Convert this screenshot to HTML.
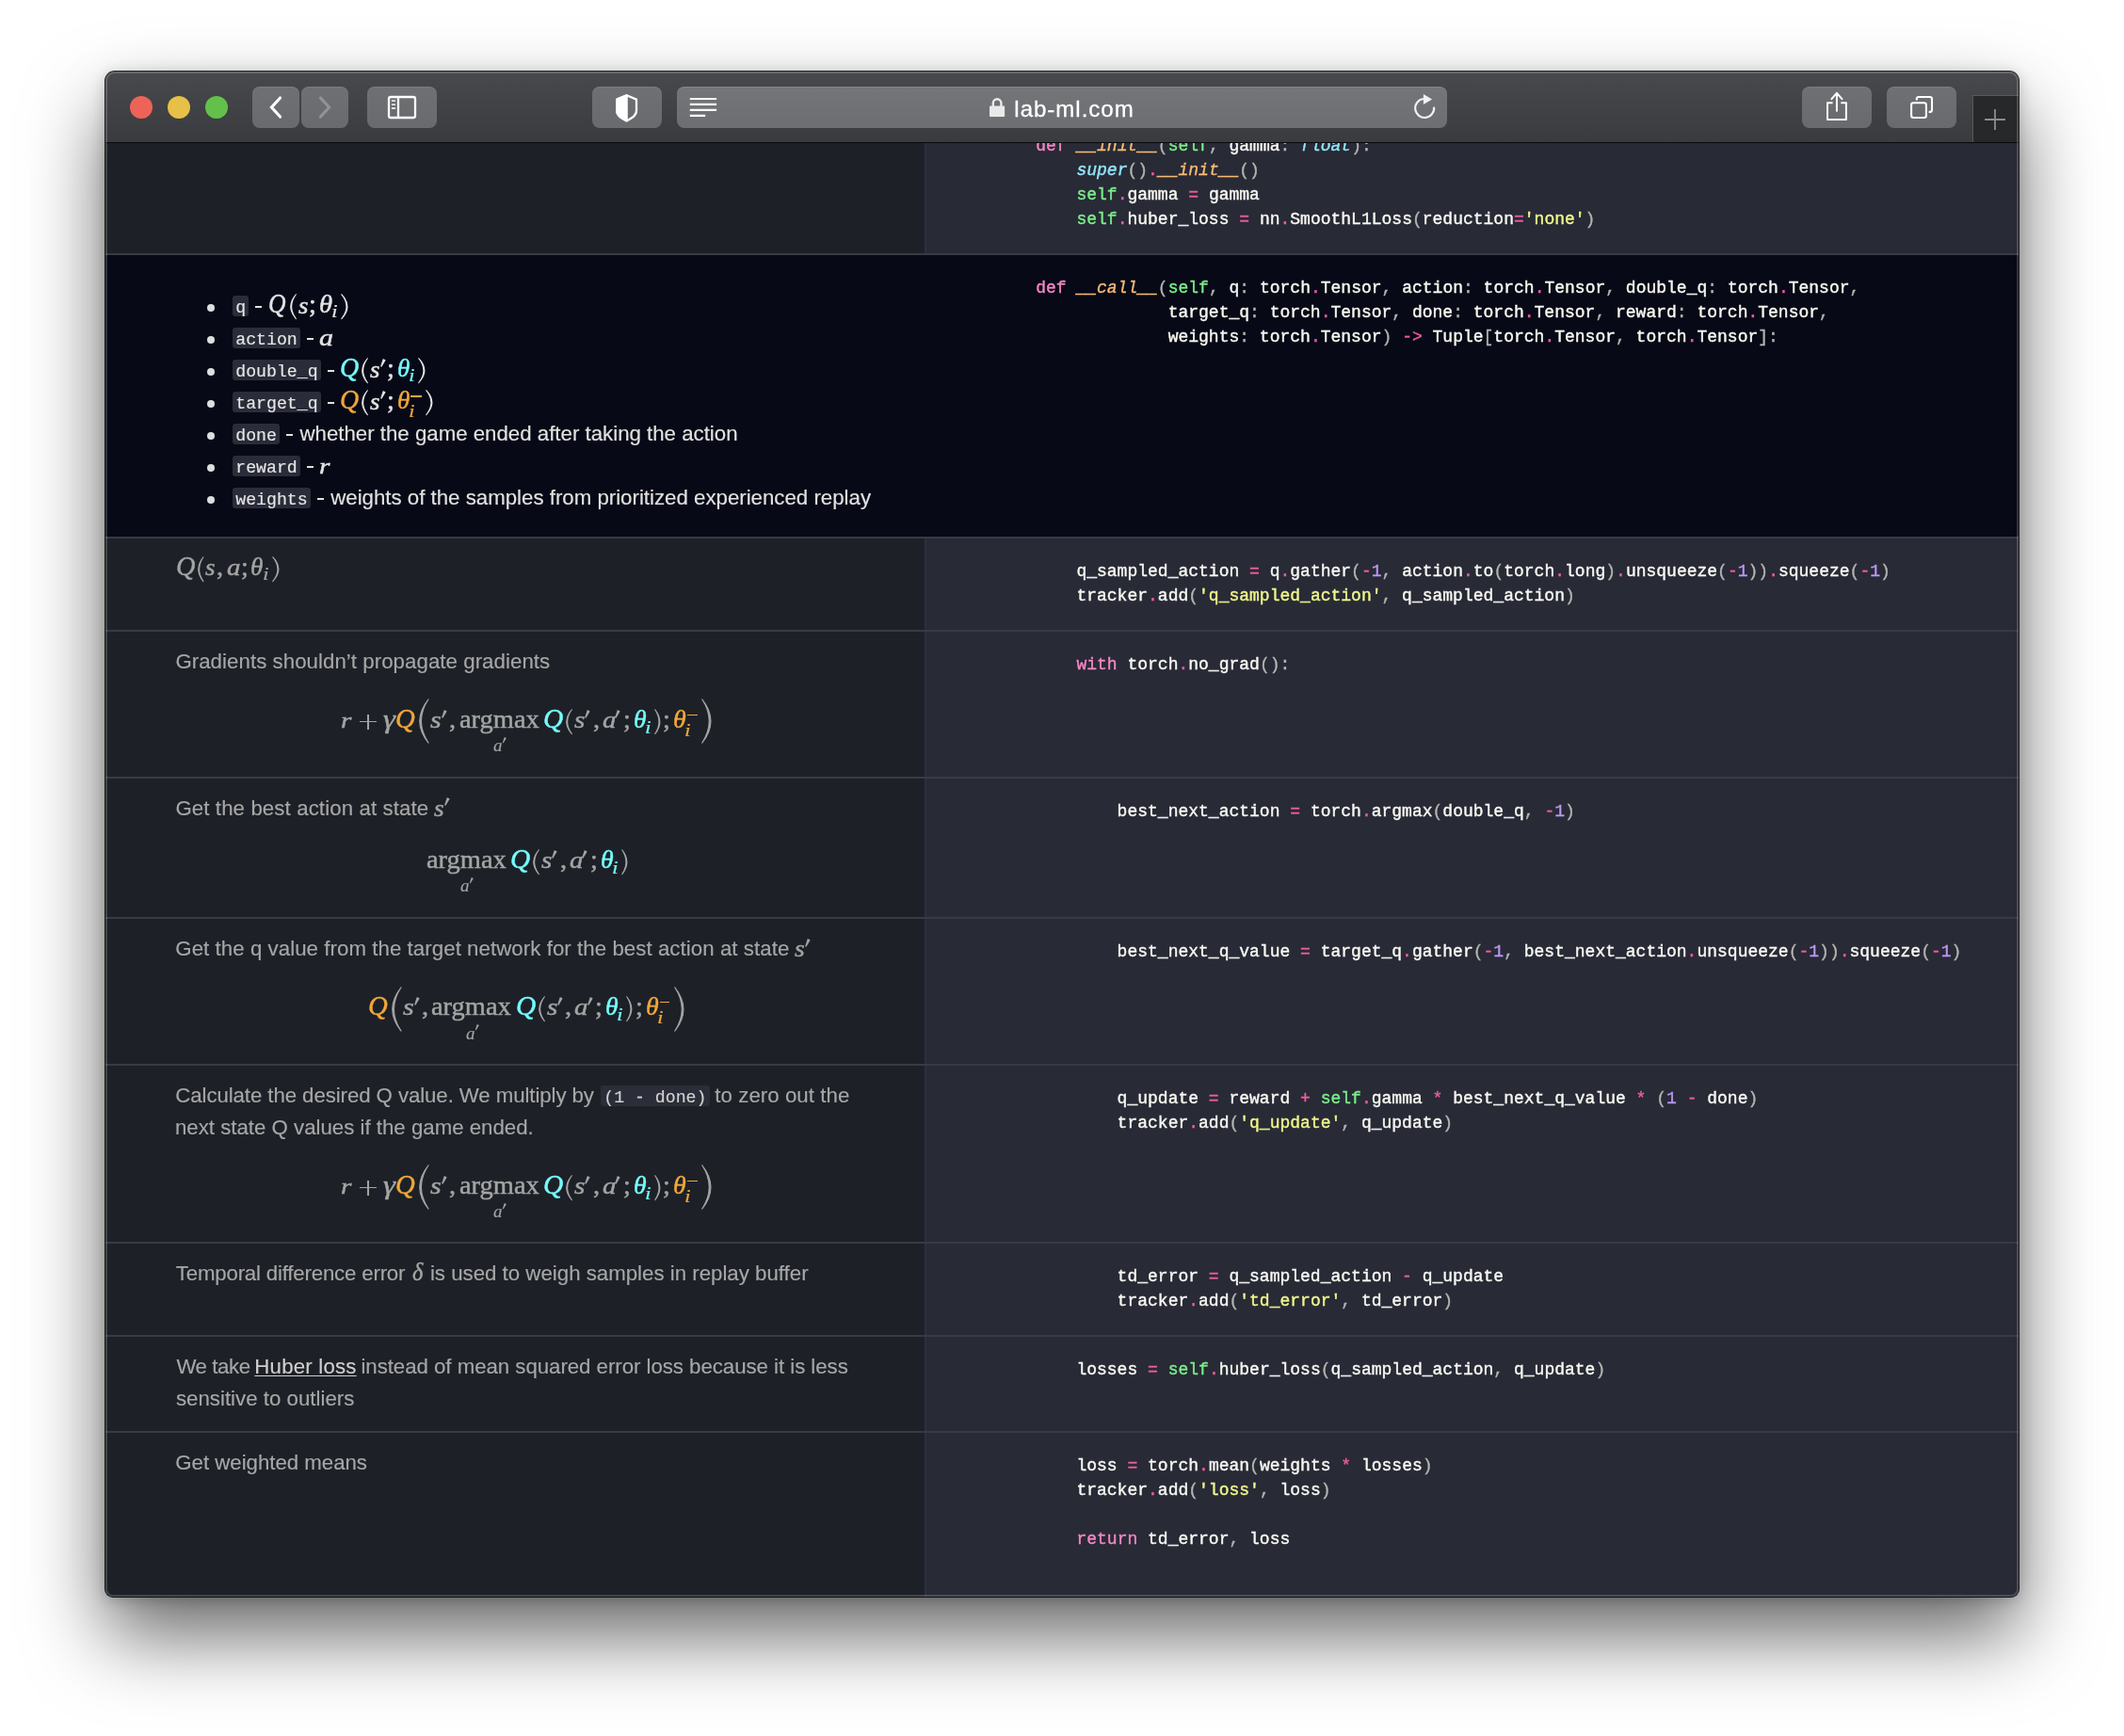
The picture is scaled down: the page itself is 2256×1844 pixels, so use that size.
<!DOCTYPE html>
<html>
<head>
<meta charset="utf-8">
<title>lab-ml.com</title>
<style>
*{box-sizing:border-box;margin:0;padding:0}
html,body{width:2256px;height:1844px;background:#fff;overflow:hidden}
body{position:relative;font-family:"Liberation Sans",sans-serif}
#win{position:absolute;left:112px;top:76px;width:2032px;height:1620px;border-radius:10px 10px 8px 8px;overflow:hidden;background:#1d2127;z-index:2;will-change:transform}
#shadow{position:absolute;left:112px;top:76px;width:2032px;height:1620px;border-radius:10px 10px 8px 8px;z-index:1;
 box-shadow:0 0 0 1px rgba(0,0,0,.85),0 41px 84px 0 rgba(0,0,0,.6),0 3px 16px 0 rgba(0,0,0,.22)}
#rim{position:absolute;left:0;top:0;width:2032px;height:1620px;border-radius:10px 10px 8px 8px;box-shadow:inset 0 0 0 2px rgba(255,255,255,.17);z-index:9;pointer-events:none}
/* ---------- toolbar ---------- */
#tb{position:absolute;left:0;top:0;width:2032px;height:76px;background:linear-gradient(#48494c,#3a3b3e);border-bottom:1.5px solid #08080a}
.tl{position:absolute;top:26px;width:24px;height:24px;border-radius:50%}
.btn{position:absolute;top:16px;height:44px;border-radius:8px;background:linear-gradient(#6f7073,#696a6d);box-shadow:inset 0 1px 0 rgba(255,255,255,.09)}
.btn svg{position:absolute;left:0;top:0}
#url{position:absolute;left:607px;top:16px;width:818px;height:44px;border-radius:8px;background:linear-gradient(#747578,#6d6e71);box-shadow:inset 0 1px 0 rgba(255,255,255,.13)}
#urltxt{position:absolute;left:965.3px;top:24.5px;font-size:24px;letter-spacing:1px;line-height:30px;-webkit-text-stroke:.3px #fff;color:#fff;white-space:pre}
#newtab{position:absolute;left:1983px;top:25px;width:50px;height:50px;background:#27282a;border-left:1px solid #58595b;border-top:1px solid #58595b}
/* ---------- content ---------- */
#content{position:absolute;left:0;top:76px;width:2032px;height:1544px;background:#1d2127;overflow:hidden}
#right{position:absolute;left:872px;top:0;width:1160px;height:1544px;background:#282a36}
#vdiv{position:absolute;left:870px;top:0;width:2px;height:1544px;background:#2b3140}
.hl{position:absolute;left:0;width:2032px;background:#070916}
.hr{position:absolute;left:0;width:2032px;height:2px;background:#383a47}
.doc{position:absolute;left:75px;-webkit-text-stroke:.15px;font-size:22.25px;line-height:34px;color:#a7a7a7;white-space:nowrap}
.lk{color:#cfcfcf;text-decoration:underline;text-decoration-thickness:1.2px;text-underline-offset:2.2px}
pre{position:absolute;left:945px;font-family:"Liberation Mono",monospace;font-size:18px;line-height:26px;color:#f8f8f2;white-space:pre;-webkit-text-stroke:.38px}
.k{color:#f587c6}.o{color:#ee5c9f}.p{color:#b4b4b0}.s{color:#f0f68b}.m{color:#bc98f5}.bp{color:#7bee8a}.fm{color:#f5bb75;font-style:italic}.nb{color:#93e6f8;font-style:italic}
code{font-family:"Liberation Mono",monospace;font-size:18.2px;line-height:1;padding:0 3.25px;color:#e6e6e6;position:relative;z-index:0}
code::before{content:"";position:absolute;z-index:-1;left:0;right:0;top:-2.85px;height:21.9px;border-radius:3px;background:#2a2c39}
.c2{color:#d2d2d2}.c2::before{background:#2b2d38}
.hy{display:inline-block;width:7.1px;height:2.1px;margin:0 7.5px 0 6.7px;vertical-align:5px;background:currentColor}

.hi{color:#e2e2e2}
.bul{position:absolute;left:107.7px;width:8.4px;height:8.4px;border-radius:50%;background:#dedede}
.mth{position:absolute;left:0;top:0;color:#a4a4a4}
.mth.hi{color:#e4e4e4}
.mth span{position:absolute;white-space:pre;line-height:1;transform-origin:0 50%;-webkit-text-stroke:.45px currentColor}
.mi{font-family:"Liberation Serif",serif;font-style:italic}
.mr{font-family:"Liberation Serif",serif}
.mb{font-family:"Liberation Serif",serif;font-style:italic;font-weight:bold}
.pa{position:absolute;overflow:visible}
.ln{position:absolute;display:block}
</style>
</head>
<body>
<div id="shadow"></div>
<div id="win">
<div id="content">
<div id="right"></div><div id="vdiv"></div>
<div class="hl" style="top:119px;height:299px"></div>
<div class="hr" style="top:117px"></div>
<div class="hr" style="top:418px"></div>
<div class="hr" style="top:517px"></div>
<div class="hr" style="top:673px"></div>
<div class="hr" style="top:822px"></div>
<div class="hr" style="top:978px"></div>
<div class="hr" style="top:1167px"></div>
<div class="hr" style="top:1266px"></div>
<div class="hr" style="top:1368px"></div>
<pre style="top:-9.8px">    <span class="k">def</span> <span class="fm">__init__</span><span class="p">(</span><span class="bp">self</span><span class="p">,</span> gamma<span class="p">:</span> <span class="nb">float</span><span class="p">)</span><span class="p">:</span>
        <span class="nb">super</span><span class="p">(</span><span class="p">)</span><span class="o">.</span><span class="fm">__init__</span><span class="p">(</span><span class="p">)</span>
        <span class="bp">self</span><span class="o">.</span>gamma <span class="o">=</span> gamma
        <span class="bp">self</span><span class="o">.</span>huber_loss <span class="o">=</span> nn<span class="o">.</span>SmoothL1Loss<span class="p">(</span>reduction<span class="o">=</span><span class="s">&#x27;none&#x27;</span><span class="p">)</span></pre>
<pre style="top:140.9px">    <span class="k">def</span> <span class="fm">__call__</span><span class="p">(</span><span class="bp">self</span><span class="p">,</span> q<span class="p">:</span> torch<span class="o">.</span>Tensor<span class="p">,</span> action<span class="p">:</span> torch<span class="o">.</span>Tensor<span class="p">,</span> double_q<span class="p">:</span> torch<span class="o">.</span>Tensor<span class="p">,</span>
                 target_q<span class="p">:</span> torch<span class="o">.</span>Tensor<span class="p">,</span> done<span class="p">:</span> torch<span class="o">.</span>Tensor<span class="p">,</span> reward<span class="p">:</span> torch<span class="o">.</span>Tensor<span class="p">,</span>
                 weights<span class="p">:</span> torch<span class="o">.</span>Tensor<span class="p">)</span> <span class="o">-&gt;</span> Tuple<span class="p">[</span>torch<span class="o">.</span>Tensor<span class="p">,</span> torch<span class="o">.</span>Tensor<span class="p">]</span><span class="p">:</span></pre>
<pre style="top:441.9px">        q_sampled_action <span class="o">=</span> q<span class="o">.</span>gather<span class="p">(</span><span class="o">-</span><span class="m">1</span><span class="p">,</span> action<span class="o">.</span>to<span class="p">(</span>torch<span class="o">.</span>long<span class="p">)</span><span class="o">.</span>unsqueeze<span class="p">(</span><span class="o">-</span><span class="m">1</span><span class="p">)</span><span class="p">)</span><span class="o">.</span>squeeze<span class="p">(</span><span class="o">-</span><span class="m">1</span><span class="p">)</span>
        tracker<span class="o">.</span>add<span class="p">(</span><span class="s">&#x27;q_sampled_action&#x27;</span><span class="p">,</span> q_sampled_action<span class="p">)</span></pre>
<pre style="top:540.9px">        <span class="k">with</span> torch<span class="o">.</span>no_grad<span class="p">(</span><span class="p">)</span><span class="p">:</span></pre>
<pre style="top:696.9px">            best_next_action <span class="o">=</span> torch<span class="o">.</span>argmax<span class="p">(</span>double_q<span class="p">,</span> <span class="o">-</span><span class="m">1</span><span class="p">)</span></pre>
<pre style="top:845.9px">            best_next_q_value <span class="o">=</span> target_q<span class="o">.</span>gather<span class="p">(</span><span class="o">-</span><span class="m">1</span><span class="p">,</span> best_next_action<span class="o">.</span>unsqueeze<span class="p">(</span><span class="o">-</span><span class="m">1</span><span class="p">)</span><span class="p">)</span><span class="o">.</span>squeeze<span class="p">(</span><span class="o">-</span><span class="m">1</span><span class="p">)</span></pre>
<pre style="top:1001.9px">            q_update <span class="o">=</span> reward <span class="o">+</span> <span class="bp">self</span><span class="o">.</span>gamma <span class="o">*</span> best_next_q_value <span class="o">*</span> <span class="p">(</span><span class="m">1</span> <span class="o">-</span> done<span class="p">)</span>
            tracker<span class="o">.</span>add<span class="p">(</span><span class="s">&#x27;q_update&#x27;</span><span class="p">,</span> q_update<span class="p">)</span></pre>
<pre style="top:1190.9px">            td_error <span class="o">=</span> q_sampled_action <span class="o">-</span> q_update
            tracker<span class="o">.</span>add<span class="p">(</span><span class="s">&#x27;td_error&#x27;</span><span class="p">,</span> td_error<span class="p">)</span></pre>
<pre style="top:1289.9px">        losses <span class="o">=</span> <span class="bp">self</span><span class="o">.</span>huber_loss<span class="p">(</span>q_sampled_action<span class="p">,</span> q_update<span class="p">)</span></pre>
<pre style="top:1391.9px">        loss <span class="o">=</span> torch<span class="o">.</span>mean<span class="p">(</span>weights <span class="o">*</span> losses<span class="p">)</span>
        tracker<span class="o">.</span>add<span class="p">(</span><span class="s">&#x27;loss&#x27;</span><span class="p">,</span> loss<span class="p">)</span>

        <span class="k">return</span> td_error<span class="p">,</span> loss</pre>
<i class="bul" style="top:170.6px"></i>
<div class="doc hi" style="left:135.0px;top:155.9px;"><code>q</code><i class="hy"></i></div>
<i class="bul" style="top:204.6px"></i>
<div class="doc hi" style="left:135.0px;top:189.9px;"><code>action</code><i class="hy"></i></div>
<i class="bul" style="top:238.7px"></i>
<div class="doc hi" style="left:135.0px;top:224.0px;"><code>double_q</code><i class="hy"></i></div>
<i class="bul" style="top:272.7px"></i>
<div class="doc hi" style="left:135.0px;top:258.0px;"><code>target_q</code><i class="hy"></i></div>
<i class="bul" style="top:306.8px"></i>
<div class="doc hi" style="left:135.0px;top:292.1px;"><code>done</code><i class="hy"></i>whether the game ended after taking the action</div>
<i class="bul" style="top:340.8px"></i>
<div class="doc hi" style="left:135.0px;top:326.1px;"><code>reward</code><i class="hy"></i></div>
<i class="bul" style="top:374.9px"></i>
<div class="doc hi" style="left:135.0px;top:360.2px;"><code>weights</code><i class="hy"></i>weights of the samples from prioritized experienced replay</div>
<div class="mth hi"><span class="mi" style="left:173.19px;top:157.03px;font-size:28.5px;transform:scaleX(0.8982);">Q</span><svg class="pa" style="left:195.20px;top:159.10px" width="10.00" height="29.30"><path d="M7.35 1.75 Q-3.85 14.65 7.35 27.55 Q-2.05 14.65 7.35 1.75Z" fill="currentColor" stroke="currentColor" stroke-width="1.1" stroke-linejoin="round"/></svg><span class="mi" style="left:204.87px;top:159.55px;font-size:25.5px;transform:scaleX(1.0520);">s</span><span class="mr" style="left:216.45px;top:158.29px;font-size:27px;transform:scaleX(1.0411);">;</span><span class="mi" style="left:226.50px;top:158.29px;font-size:27px;transform:scaleX(1.0609);">θ</span><span class="mi" style="left:239.64px;top:168.97px;font-size:19.5px;transform:scaleX(1.2200);-webkit-text-stroke-width:.15px;">i</span><svg class="pa" style="left:248.50px;top:159.10px" width="10.60" height="29.30"><path d="M1.75 1.75 Q14.15 14.65 1.75 27.55 Q12.35 14.65 1.75 1.75Z" fill="currentColor" stroke="currentColor" stroke-width="1.1" stroke-linejoin="round"/></svg><span class="mi" style="left:227.00px;top:193.75px;font-size:25.5px;transform:scaleX(1.1784);">a</span><span class="mi" style="left:248.66px;top:225.03px;font-size:28.5px;transform:scaleX(0.9794);color:#75fbfd;">Q</span><svg class="pa" style="left:271.30px;top:227.10px" width="10.00" height="29.30"><path d="M7.35 1.75 Q-3.85 14.65 7.35 27.55 Q-2.05 14.65 7.35 1.75Z" fill="currentColor" stroke="currentColor" stroke-width="1.1" stroke-linejoin="round"/></svg><span class="mi" style="left:280.97px;top:227.55px;font-size:25.5px;transform:scaleX(1.0520);">s</span><svg class="pa" style="left:290.60px;top:229.30px" width="8.00" height="10.00" viewBox="0 0 8 10"><path d="M3.8 0.1 L6.7 1.4 L2.4 8.8 L1.1 8.2 Z" fill="currentColor"/></svg><span class="mr" style="left:298.95px;top:226.29px;font-size:27px;transform:scaleX(1.0411);">;</span><span class="mi" style="left:309.97px;top:226.29px;font-size:27px;transform:scaleX(1.0078);color:#75fbfd;">θ</span><span class="mi" style="left:322.44px;top:236.97px;font-size:19.5px;transform:scaleX(1.2200);color:#75fbfd;-webkit-text-stroke-width:.15px;">i</span><svg class="pa" style="left:331.40px;top:227.10px" width="10.50" height="29.30"><path d="M1.75 1.75 Q13.95 14.65 1.75 27.55 Q12.15 14.65 1.75 1.75Z" fill="currentColor" stroke="currentColor" stroke-width="1.1" stroke-linejoin="round"/></svg><span class="mi" style="left:248.66px;top:259.03px;font-size:28.5px;transform:scaleX(0.9794);color:#f1a73a;">Q</span><svg class="pa" style="left:271.30px;top:261.10px" width="10.00" height="29.30"><path d="M7.35 1.75 Q-3.85 14.65 7.35 27.55 Q-2.05 14.65 7.35 1.75Z" fill="currentColor" stroke="currentColor" stroke-width="1.1" stroke-linejoin="round"/></svg><span class="mi" style="left:280.97px;top:261.55px;font-size:25.5px;transform:scaleX(1.0520);">s</span><svg class="pa" style="left:290.60px;top:263.30px" width="8.00" height="10.00" viewBox="0 0 8 10"><path d="M3.8 0.1 L6.7 1.4 L2.4 8.8 L1.1 8.2 Z" fill="currentColor"/></svg><span class="mr" style="left:298.95px;top:260.29px;font-size:27px;transform:scaleX(1.0411);">;</span><span class="mi" style="left:309.97px;top:260.29px;font-size:27px;transform:scaleX(1.0078);color:#f1a73a;">θ</span><i class="ln" style="left:324.30px;top:268.35px;width:11.40px;height:1.3px;background:#f1a73a"></i><span class="mi" style="left:322.44px;top:275.27px;font-size:19.5px;transform:scaleX(1.2200);color:#f1a73a;-webkit-text-stroke-width:.15px;">i</span><svg class="pa" style="left:339.10px;top:261.10px" width="10.50" height="29.30"><path d="M1.75 1.75 Q13.95 14.65 1.75 27.55 Q12.15 14.65 1.75 1.75Z" fill="currentColor" stroke="currentColor" stroke-width="1.1" stroke-linejoin="round"/></svg><span class="mi" style="left:227.32px;top:330.80px;font-size:24px;transform:scaleX(1.2200);">r</span></div>
<div class="doc " style="left:74.38px;top:534.0px;letter-spacing:0.052px">Gradients shouldn’t propagate gradients</div>
<div class="doc " style="left:74.38px;top:689.9px;letter-spacing:0.106px">Get the best action at state</div>
<div class="doc " style="left:74.28px;top:838.9px;letter-spacing:0.059px">Get the q value from the target network for the best action at state</div>
<div class="doc " style="left:74.27px;top:994.9px;letter-spacing:-0.087px">Calculate the desired Q value. We multiply by</div>
<div class="doc " style="left:647.36px;top:994.9px;letter-spacing:0.048px">to zero out the</div>
<div class="doc " style="left:73.92px;top:1028.9px;letter-spacing:-0.002px">next state Q values if the game ended.</div>
<div class="doc " style="left:74.80px;top:1183.9px;letter-spacing:-0.188px">Temporal difference error</div>
<div class="doc " style="left:344.91px;top:1183.9px;letter-spacing:0.003px">is used to weigh samples in replay buffer</div>
<div class="doc " style="left:75.40px;top:1282.7px;letter-spacing:-0.422px">We take</div>
<div class="doc lk" style="left:158.37px;top:1282.7px;letter-spacing:0.197px">Huber loss</div>
<div class="doc " style="left:271.41px;top:1282.7px;letter-spacing:-0.039px">instead of mean squared error loss because it is less</div>
<div class="doc " style="left:74.88px;top:1316.6px;letter-spacing:0.015px">sensitive to outliers</div>
<div class="doc " style="left:74.28px;top:1384.9px;letter-spacing:-0.021px">Get weighted means</div>
<div class="doc" style="left:526.0px;top:994.9px"><code class="c2">(1 - done)</code></div>
<div class="mth"><span class="mi" style="left:74.54px;top:435.73px;font-size:28.5px;transform:scaleX(0.9902);">Q</span><svg class="pa" style="left:96.80px;top:437.80px" width="9.60" height="29.30"><path d="M6.95 1.75 Q-3.45 14.65 6.95 27.55 Q-1.65 14.65 6.95 1.75Z" fill="currentColor" stroke="currentColor" stroke-width="1.1" stroke-linejoin="round"/></svg><span class="mi" style="left:106.47px;top:438.25px;font-size:25.5px;transform:scaleX(1.0633);">s</span><span class="mr" style="left:118.43px;top:436.99px;font-size:27px;transform:scaleX(1.0445);">,</span><span class="mi" style="left:129.24px;top:438.25px;font-size:25.5px;transform:scaleX(1.1331);">a</span><span class="mr" style="left:143.75px;top:436.99px;font-size:27px;transform:scaleX(1.0411);">;</span><span class="mi" style="left:154.47px;top:436.99px;font-size:27px;transform:scaleX(1.0078);">θ</span><span class="mi" style="left:166.64px;top:448.47px;font-size:19.5px;transform:scaleX(1.2200);-webkit-text-stroke-width:.15px;">i</span><svg class="pa" style="left:175.60px;top:437.80px" width="10.50" height="29.30"><path d="M1.75 1.75 Q13.95 14.65 1.75 27.55 Q12.15 14.65 1.75 1.75Z" fill="currentColor" stroke="currentColor" stroke-width="1.1" stroke-linejoin="round"/></svg><span class="mi" style="left:250.42px;top:601.30px;font-size:24px;transform:scaleX(1.2200);">r</span><i class="ln" style="left:269.70px;top:613.65px;width:18.35px;height:1.5px;background:currentColor"></i><i class="ln" style="left:278.15px;top:607.40px;width:1.5px;height:16.00px;background:currentColor"></i><span class="mi" style="left:295.05px;top:598.79px;font-size:27px;transform:scaleX(1.2200);">γ</span><span class="mi" style="left:308.22px;top:597.53px;font-size:28.5px;transform:scaleX(1.0065);color:#f1a73a;">Q</span><svg class="pa" style="left:332.40px;top:589.30px" width="14.50" height="49.80"><path d="M11.05 1.75 Q-7.55 24.90 11.05 48.05 Q-4.15 24.90 11.05 1.75Z" fill="currentColor" stroke="currentColor" stroke-width="1.1" stroke-linejoin="round"/></svg><span class="mi" style="left:345.13px;top:600.05px;font-size:25.5px;transform:scaleX(1.1764);">s</span><svg class="pa" style="left:355.90px;top:601.80px" width="8.00" height="10.00" viewBox="0 0 8 10"><path d="M3.8 0.1 L6.7 1.4 L2.4 8.8 L1.1 8.2 Z" fill="currentColor"/></svg><span class="mr" style="left:365.13px;top:598.79px;font-size:27px;transform:scaleX(1.0445);">,</span><span class="mr" style="left:375.60px;top:598.79px;font-size:27px;transform:scaleX(1.0529);">argmax</span><span class="mi" style="left:412.34px;top:630.37px;font-size:19.5px;transform:scaleX(0.9720);-webkit-text-stroke-width:.15px;">a</span><svg class="pa" style="left:421.48px;top:631.00px" width="5.76" height="7.20" viewBox="0 0 8 10"><path d="M3.8 0.1 L6.7 1.4 L2.4 8.8 L1.1 8.2 Z" fill="currentColor"/></svg><span class="mi" style="left:465.38px;top:597.53px;font-size:28.5px;transform:scaleX(1.0281);color:#75fbfd;">Q</span><svg class="pa" style="left:487.90px;top:599.60px" width="10.00" height="29.30"><path d="M7.35 1.75 Q-3.85 14.65 7.35 27.55 Q-2.05 14.65 7.35 1.75Z" fill="currentColor" stroke="currentColor" stroke-width="1.1" stroke-linejoin="round"/></svg><span class="mi" style="left:498.04px;top:600.05px;font-size:25.5px;transform:scaleX(1.1425);">s</span><svg class="pa" style="left:508.30px;top:601.80px" width="8.00" height="10.00" viewBox="0 0 8 10"><path d="M3.8 0.1 L6.7 1.4 L2.4 8.8 L1.1 8.2 Z" fill="currentColor"/></svg><span class="mr" style="left:517.53px;top:598.79px;font-size:27px;transform:scaleX(1.0445);">,</span><span class="mi" style="left:527.54px;top:600.05px;font-size:25.5px;transform:scaleX(1.1331);">a</span><svg class="pa" style="left:540.40px;top:601.80px" width="8.00" height="10.00" viewBox="0 0 8 10"><path d="M3.8 0.1 L6.7 1.4 L2.4 8.8 L1.1 8.2 Z" fill="currentColor"/></svg><span class="mr" style="left:549.75px;top:598.79px;font-size:27px;transform:scaleX(1.0411);">;</span><span class="mi" style="left:560.75px;top:598.79px;font-size:27px;transform:scaleX(1.0255);color:#75fbfd;">θ</span><span class="mi" style="left:572.69px;top:610.67px;font-size:19.5px;transform:scaleX(1.2200);color:#75fbfd;-webkit-text-stroke-width:.15px;">i</span><svg class="pa" style="left:581.60px;top:599.60px" width="9.50" height="29.30"><path d="M1.75 1.75 Q11.95 14.65 1.75 27.55 Q10.15 14.65 1.75 1.75Z" fill="currentColor" stroke="currentColor" stroke-width="1.1" stroke-linejoin="round"/></svg><span class="mr" style="left:592.25px;top:598.79px;font-size:27px;transform:scaleX(1.0411);">;</span><span class="mi" style="left:603.44px;top:598.79px;font-size:27px;transform:scaleX(1.0343);color:#f1a73a;">θ</span><i class="ln" style="left:618.00px;top:606.85px;width:10.90px;height:1.3px;background:#f1a73a"></i><span class="mi" style="left:615.19px;top:613.77px;font-size:19.5px;transform:scaleX(1.2200);color:#f1a73a;-webkit-text-stroke-width:.15px;">i</span><svg class="pa" style="left:631.90px;top:589.30px" width="14.40" height="49.80"><path d="M1.75 1.75 Q20.15 24.90 1.75 48.05 Q16.75 24.90 1.75 1.75Z" fill="currentColor" stroke="currentColor" stroke-width="1.1" stroke-linejoin="round"/></svg><span class="mr" style="left:340.60px;top:747.79px;font-size:27px;transform:scaleX(1.0529);">argmax</span><span class="mi" style="left:377.34px;top:779.37px;font-size:19.5px;transform:scaleX(0.9720);-webkit-text-stroke-width:.15px;">a</span><svg class="pa" style="left:386.48px;top:780.00px" width="5.76" height="7.20" viewBox="0 0 8 10"><path d="M3.8 0.1 L6.7 1.4 L2.4 8.8 L1.1 8.2 Z" fill="currentColor"/></svg><span class="mi" style="left:430.38px;top:746.53px;font-size:28.5px;transform:scaleX(1.0281);color:#75fbfd;">Q</span><svg class="pa" style="left:452.90px;top:748.60px" width="10.00" height="29.30"><path d="M7.35 1.75 Q-3.85 14.65 7.35 27.55 Q-2.05 14.65 7.35 1.75Z" fill="currentColor" stroke="currentColor" stroke-width="1.1" stroke-linejoin="round"/></svg><span class="mi" style="left:463.04px;top:749.05px;font-size:25.5px;transform:scaleX(1.1425);">s</span><svg class="pa" style="left:473.30px;top:750.80px" width="8.00" height="10.00" viewBox="0 0 8 10"><path d="M3.8 0.1 L6.7 1.4 L2.4 8.8 L1.1 8.2 Z" fill="currentColor"/></svg><span class="mr" style="left:482.53px;top:747.79px;font-size:27px;transform:scaleX(1.0445);">,</span><span class="mi" style="left:492.54px;top:749.05px;font-size:25.5px;transform:scaleX(1.1331);">a</span><svg class="pa" style="left:505.40px;top:750.80px" width="8.00" height="10.00" viewBox="0 0 8 10"><path d="M3.8 0.1 L6.7 1.4 L2.4 8.8 L1.1 8.2 Z" fill="currentColor"/></svg><span class="mr" style="left:514.75px;top:747.79px;font-size:27px;transform:scaleX(1.0411);">;</span><span class="mi" style="left:525.75px;top:747.79px;font-size:27px;transform:scaleX(1.0255);color:#75fbfd;">θ</span><span class="mi" style="left:537.69px;top:759.67px;font-size:19.5px;transform:scaleX(1.2200);color:#75fbfd;-webkit-text-stroke-width:.15px;">i</span><svg class="pa" style="left:546.60px;top:748.60px" width="9.50" height="29.30"><path d="M1.75 1.75 Q11.95 14.65 1.75 27.55 Q10.15 14.65 1.75 1.75Z" fill="currentColor" stroke="currentColor" stroke-width="1.1" stroke-linejoin="round"/></svg><span class="mi" style="left:348.67px;top:693.55px;font-size:25.5px;transform:scaleX(1.0746);">s</span><svg class="pa" style="left:358.50px;top:695.30px" width="8.00" height="10.00" viewBox="0 0 8 10"><path d="M3.8 0.1 L6.7 1.4 L2.4 8.8 L1.1 8.2 Z" fill="currentColor"/></svg><span class="mi" style="left:278.82px;top:902.73px;font-size:28.5px;transform:scaleX(1.0065);color:#f1a73a;">Q</span><svg class="pa" style="left:303.00px;top:894.50px" width="14.50" height="49.80"><path d="M11.05 1.75 Q-7.55 24.90 11.05 48.05 Q-4.15 24.90 11.05 1.75Z" fill="currentColor" stroke="currentColor" stroke-width="1.1" stroke-linejoin="round"/></svg><span class="mi" style="left:315.73px;top:905.25px;font-size:25.5px;transform:scaleX(1.1764);">s</span><svg class="pa" style="left:326.50px;top:907.00px" width="8.00" height="10.00" viewBox="0 0 8 10"><path d="M3.8 0.1 L6.7 1.4 L2.4 8.8 L1.1 8.2 Z" fill="currentColor"/></svg><span class="mr" style="left:335.73px;top:903.99px;font-size:27px;transform:scaleX(1.0445);">,</span><span class="mr" style="left:346.20px;top:903.99px;font-size:27px;transform:scaleX(1.0529);">argmax</span><span class="mi" style="left:382.94px;top:935.57px;font-size:19.5px;transform:scaleX(0.9720);-webkit-text-stroke-width:.15px;">a</span><svg class="pa" style="left:392.08px;top:936.20px" width="5.76" height="7.20" viewBox="0 0 8 10"><path d="M3.8 0.1 L6.7 1.4 L2.4 8.8 L1.1 8.2 Z" fill="currentColor"/></svg><span class="mi" style="left:435.98px;top:902.73px;font-size:28.5px;transform:scaleX(1.0281);color:#75fbfd;">Q</span><svg class="pa" style="left:458.50px;top:904.80px" width="10.00" height="29.30"><path d="M7.35 1.75 Q-3.85 14.65 7.35 27.55 Q-2.05 14.65 7.35 1.75Z" fill="currentColor" stroke="currentColor" stroke-width="1.1" stroke-linejoin="round"/></svg><span class="mi" style="left:468.64px;top:905.25px;font-size:25.5px;transform:scaleX(1.1425);">s</span><svg class="pa" style="left:478.90px;top:907.00px" width="8.00" height="10.00" viewBox="0 0 8 10"><path d="M3.8 0.1 L6.7 1.4 L2.4 8.8 L1.1 8.2 Z" fill="currentColor"/></svg><span class="mr" style="left:488.13px;top:903.99px;font-size:27px;transform:scaleX(1.0445);">,</span><span class="mi" style="left:498.14px;top:905.25px;font-size:25.5px;transform:scaleX(1.1331);">a</span><svg class="pa" style="left:511.00px;top:907.00px" width="8.00" height="10.00" viewBox="0 0 8 10"><path d="M3.8 0.1 L6.7 1.4 L2.4 8.8 L1.1 8.2 Z" fill="currentColor"/></svg><span class="mr" style="left:520.35px;top:903.99px;font-size:27px;transform:scaleX(1.0411);">;</span><span class="mi" style="left:531.35px;top:903.99px;font-size:27px;transform:scaleX(1.0255);color:#75fbfd;">θ</span><span class="mi" style="left:543.29px;top:915.87px;font-size:19.5px;transform:scaleX(1.2200);color:#75fbfd;-webkit-text-stroke-width:.15px;">i</span><svg class="pa" style="left:552.20px;top:904.80px" width="9.50" height="29.30"><path d="M1.75 1.75 Q11.95 14.65 1.75 27.55 Q10.15 14.65 1.75 1.75Z" fill="currentColor" stroke="currentColor" stroke-width="1.1" stroke-linejoin="round"/></svg><span class="mr" style="left:562.85px;top:903.99px;font-size:27px;transform:scaleX(1.0411);">;</span><span class="mi" style="left:574.04px;top:903.99px;font-size:27px;transform:scaleX(1.0343);color:#f1a73a;">θ</span><i class="ln" style="left:588.60px;top:912.05px;width:10.90px;height:1.3px;background:#f1a73a"></i><span class="mi" style="left:585.79px;top:918.97px;font-size:19.5px;transform:scaleX(1.2200);color:#f1a73a;-webkit-text-stroke-width:.15px;">i</span><svg class="pa" style="left:602.50px;top:894.50px" width="14.40" height="49.80"><path d="M1.75 1.75 Q20.15 24.90 1.75 48.05 Q16.75 24.90 1.75 1.75Z" fill="currentColor" stroke="currentColor" stroke-width="1.1" stroke-linejoin="round"/></svg><span class="mi" style="left:732.07px;top:843.05px;font-size:25.5px;transform:scaleX(1.0746);">s</span><svg class="pa" style="left:741.90px;top:844.80px" width="8.00" height="10.00" viewBox="0 0 8 10"><path d="M3.8 0.1 L6.7 1.4 L2.4 8.8 L1.1 8.2 Z" fill="currentColor"/></svg><span class="mi" style="left:250.42px;top:1096.30px;font-size:24px;transform:scaleX(1.2200);">r</span><i class="ln" style="left:269.70px;top:1108.65px;width:18.35px;height:1.5px;background:currentColor"></i><i class="ln" style="left:278.15px;top:1102.40px;width:1.5px;height:16.00px;background:currentColor"></i><span class="mi" style="left:295.05px;top:1093.79px;font-size:27px;transform:scaleX(1.2200);">γ</span><span class="mi" style="left:308.22px;top:1092.53px;font-size:28.5px;transform:scaleX(1.0065);color:#f1a73a;">Q</span><svg class="pa" style="left:332.40px;top:1084.30px" width="14.50" height="49.80"><path d="M11.05 1.75 Q-7.55 24.90 11.05 48.05 Q-4.15 24.90 11.05 1.75Z" fill="currentColor" stroke="currentColor" stroke-width="1.1" stroke-linejoin="round"/></svg><span class="mi" style="left:345.13px;top:1095.05px;font-size:25.5px;transform:scaleX(1.1764);">s</span><svg class="pa" style="left:355.90px;top:1096.80px" width="8.00" height="10.00" viewBox="0 0 8 10"><path d="M3.8 0.1 L6.7 1.4 L2.4 8.8 L1.1 8.2 Z" fill="currentColor"/></svg><span class="mr" style="left:365.13px;top:1093.79px;font-size:27px;transform:scaleX(1.0445);">,</span><span class="mr" style="left:375.60px;top:1093.79px;font-size:27px;transform:scaleX(1.0529);">argmax</span><span class="mi" style="left:412.34px;top:1125.37px;font-size:19.5px;transform:scaleX(0.9720);-webkit-text-stroke-width:.15px;">a</span><svg class="pa" style="left:421.48px;top:1126.00px" width="5.76" height="7.20" viewBox="0 0 8 10"><path d="M3.8 0.1 L6.7 1.4 L2.4 8.8 L1.1 8.2 Z" fill="currentColor"/></svg><span class="mi" style="left:465.38px;top:1092.53px;font-size:28.5px;transform:scaleX(1.0281);color:#75fbfd;">Q</span><svg class="pa" style="left:487.90px;top:1094.60px" width="10.00" height="29.30"><path d="M7.35 1.75 Q-3.85 14.65 7.35 27.55 Q-2.05 14.65 7.35 1.75Z" fill="currentColor" stroke="currentColor" stroke-width="1.1" stroke-linejoin="round"/></svg><span class="mi" style="left:498.04px;top:1095.05px;font-size:25.5px;transform:scaleX(1.1425);">s</span><svg class="pa" style="left:508.30px;top:1096.80px" width="8.00" height="10.00" viewBox="0 0 8 10"><path d="M3.8 0.1 L6.7 1.4 L2.4 8.8 L1.1 8.2 Z" fill="currentColor"/></svg><span class="mr" style="left:517.53px;top:1093.79px;font-size:27px;transform:scaleX(1.0445);">,</span><span class="mi" style="left:527.54px;top:1095.05px;font-size:25.5px;transform:scaleX(1.1331);">a</span><svg class="pa" style="left:540.40px;top:1096.80px" width="8.00" height="10.00" viewBox="0 0 8 10"><path d="M3.8 0.1 L6.7 1.4 L2.4 8.8 L1.1 8.2 Z" fill="currentColor"/></svg><span class="mr" style="left:549.75px;top:1093.79px;font-size:27px;transform:scaleX(1.0411);">;</span><span class="mi" style="left:560.75px;top:1093.79px;font-size:27px;transform:scaleX(1.0255);color:#75fbfd;">θ</span><span class="mi" style="left:572.69px;top:1105.67px;font-size:19.5px;transform:scaleX(1.2200);color:#75fbfd;-webkit-text-stroke-width:.15px;">i</span><svg class="pa" style="left:581.60px;top:1094.60px" width="9.50" height="29.30"><path d="M1.75 1.75 Q11.95 14.65 1.75 27.55 Q10.15 14.65 1.75 1.75Z" fill="currentColor" stroke="currentColor" stroke-width="1.1" stroke-linejoin="round"/></svg><span class="mr" style="left:592.25px;top:1093.79px;font-size:27px;transform:scaleX(1.0411);">;</span><span class="mi" style="left:603.44px;top:1093.79px;font-size:27px;transform:scaleX(1.0343);color:#f1a73a;">θ</span><i class="ln" style="left:618.00px;top:1101.85px;width:10.90px;height:1.3px;background:#f1a73a"></i><span class="mi" style="left:615.19px;top:1108.77px;font-size:19.5px;transform:scaleX(1.2200);color:#f1a73a;-webkit-text-stroke-width:.15px;">i</span><svg class="pa" style="left:631.90px;top:1084.30px" width="14.40" height="49.80"><path d="M1.75 1.75 Q20.15 24.90 1.75 48.05 Q16.75 24.90 1.75 1.75Z" fill="currentColor" stroke="currentColor" stroke-width="1.1" stroke-linejoin="round"/></svg><span class="mi" style="left:326.09px;top:1185.69px;font-size:27px;transform:scaleX(0.8997);">δ</span></div>
</div>
<div id="tb">
<div class="tl" style="left:26px;background:#ee6358"></div>
<div class="tl" style="left:66px;background:#e6c047"></div>
<div class="tl" style="left:106px;background:#63c14b"></div>
<div class="btn" style="left:156px;width:50px"><svg width="50" height="44"><path d="M29.6 12 L20.4 22 L29.6 32" fill="none" stroke="#fff" stroke-width="3.1" stroke-linecap="round" stroke-linejoin="miter"/></svg></div>
<div class="btn" style="left:208px;width:50px"><svg width="50" height="44"><path d="M20.4 12 L29.6 22 L20.4 32" fill="none" stroke="#929396" stroke-width="3.1" stroke-linecap="round" stroke-linejoin="miter"/></svg></div>
<div class="btn" style="left:278px;width:74px"><svg width="74" height="44"><rect x="23" y="11" width="28" height="22" rx="2" fill="none" stroke="#fff" stroke-width="2.3"/><path d="M33 11 V33" stroke="#fff" stroke-width="2.3"/><path d="M25.9 15.1 H30 M25.9 19.1 H30 M25.9 23 H30" stroke="#e4e4e4" stroke-width="1.8"/></svg></div>
<div class="btn" style="left:517px;width:74px"><svg width="74" height="44"><path d="M36.6 9.3 L26.2 13.6 V25.5 C26.2 31 31.4 33.6 36.6 36.3 C41.8 33.6 47 31 47 25.5 V13.6 Z" fill="none" stroke="#fff" stroke-width="2.3" stroke-linejoin="round"/><path d="M36.6 9.3 L26.2 13.6 V25.5 C26.2 31 31.4 33.6 36.6 36.3 Z" fill="#fff" stroke="#fff" stroke-width="2.3" stroke-linejoin="round"/></svg></div>
<div id="url"><svg width="818" height="44" style="position:absolute;left:0;top:0"><path d="M13.8 13 H42.1 M13.8 18.9 H42.1 M13.8 24.9 H42.1 M13.8 30.9 H30.2" stroke="#fff" stroke-width="2.1"/><g transform="translate(332,12)"><rect x="0" y="8.5" width="16.1" height="11.4" rx="1" fill="#e9e9e9"/><path d="M3.8 9 V5.6 A4.3 4.3 0 0 1 12.4 5.6 V9" fill="none" stroke="#e9e9e9" stroke-width="2.4"/></g><g transform="translate(794.15,22.95)"><path d="M9.9 -1.4 A10 10 0 1 1 -1.2 -9.93" fill="none" stroke="#f2f2f2" stroke-width="2.1"/><path d="M-1.25 -14.95 V-3.95 L7.95 -9.45 Z" fill="#f2f2f2"/></g></svg></div>
<div id="urltxt">lab-ml.com</div>
<div class="btn" style="left:1802px;width:74px"><svg width="74" height="44"><path d="M32.6 17.2 H27 V35 H46.9 V17.2 H41.3" fill="none" stroke="#fff" stroke-width="2" stroke-linejoin="round"/><path d="M36.95 25.8 V7.2 M31.4 13.2 L36.95 6.8 L42.5 13.2" fill="none" stroke="#fff" stroke-width="2" stroke-linecap="round" stroke-linejoin="round"/></svg></div>
<div class="btn" style="left:1892px;width:74px"><svg width="74" height="44"><rect x="26.1" y="17.2" width="15.8" height="15.8" rx="2.2" fill="none" stroke="#fff" stroke-width="2.1"/><path d="M31.8 14.6 V13.2 A2.2 2.2 0 0 1 34 11 H45.8 A2.2 2.2 0 0 1 48 13.2 V24.7 A2.2 2.2 0 0 1 45.8 26.9 H44.6" fill="none" stroke="#fff" stroke-width="2.1"/></svg></div>
<div id="newtab"><svg width="50" height="50" style="position:absolute;left:-1px;top:-1px"><path d="M13.1 26 H34.9 M24 15.1 V36.9" stroke="#8d8d8f" stroke-width="1.8"/></svg></div>
</div>
<div id="rim"></div>
</div>
</body>
</html>
